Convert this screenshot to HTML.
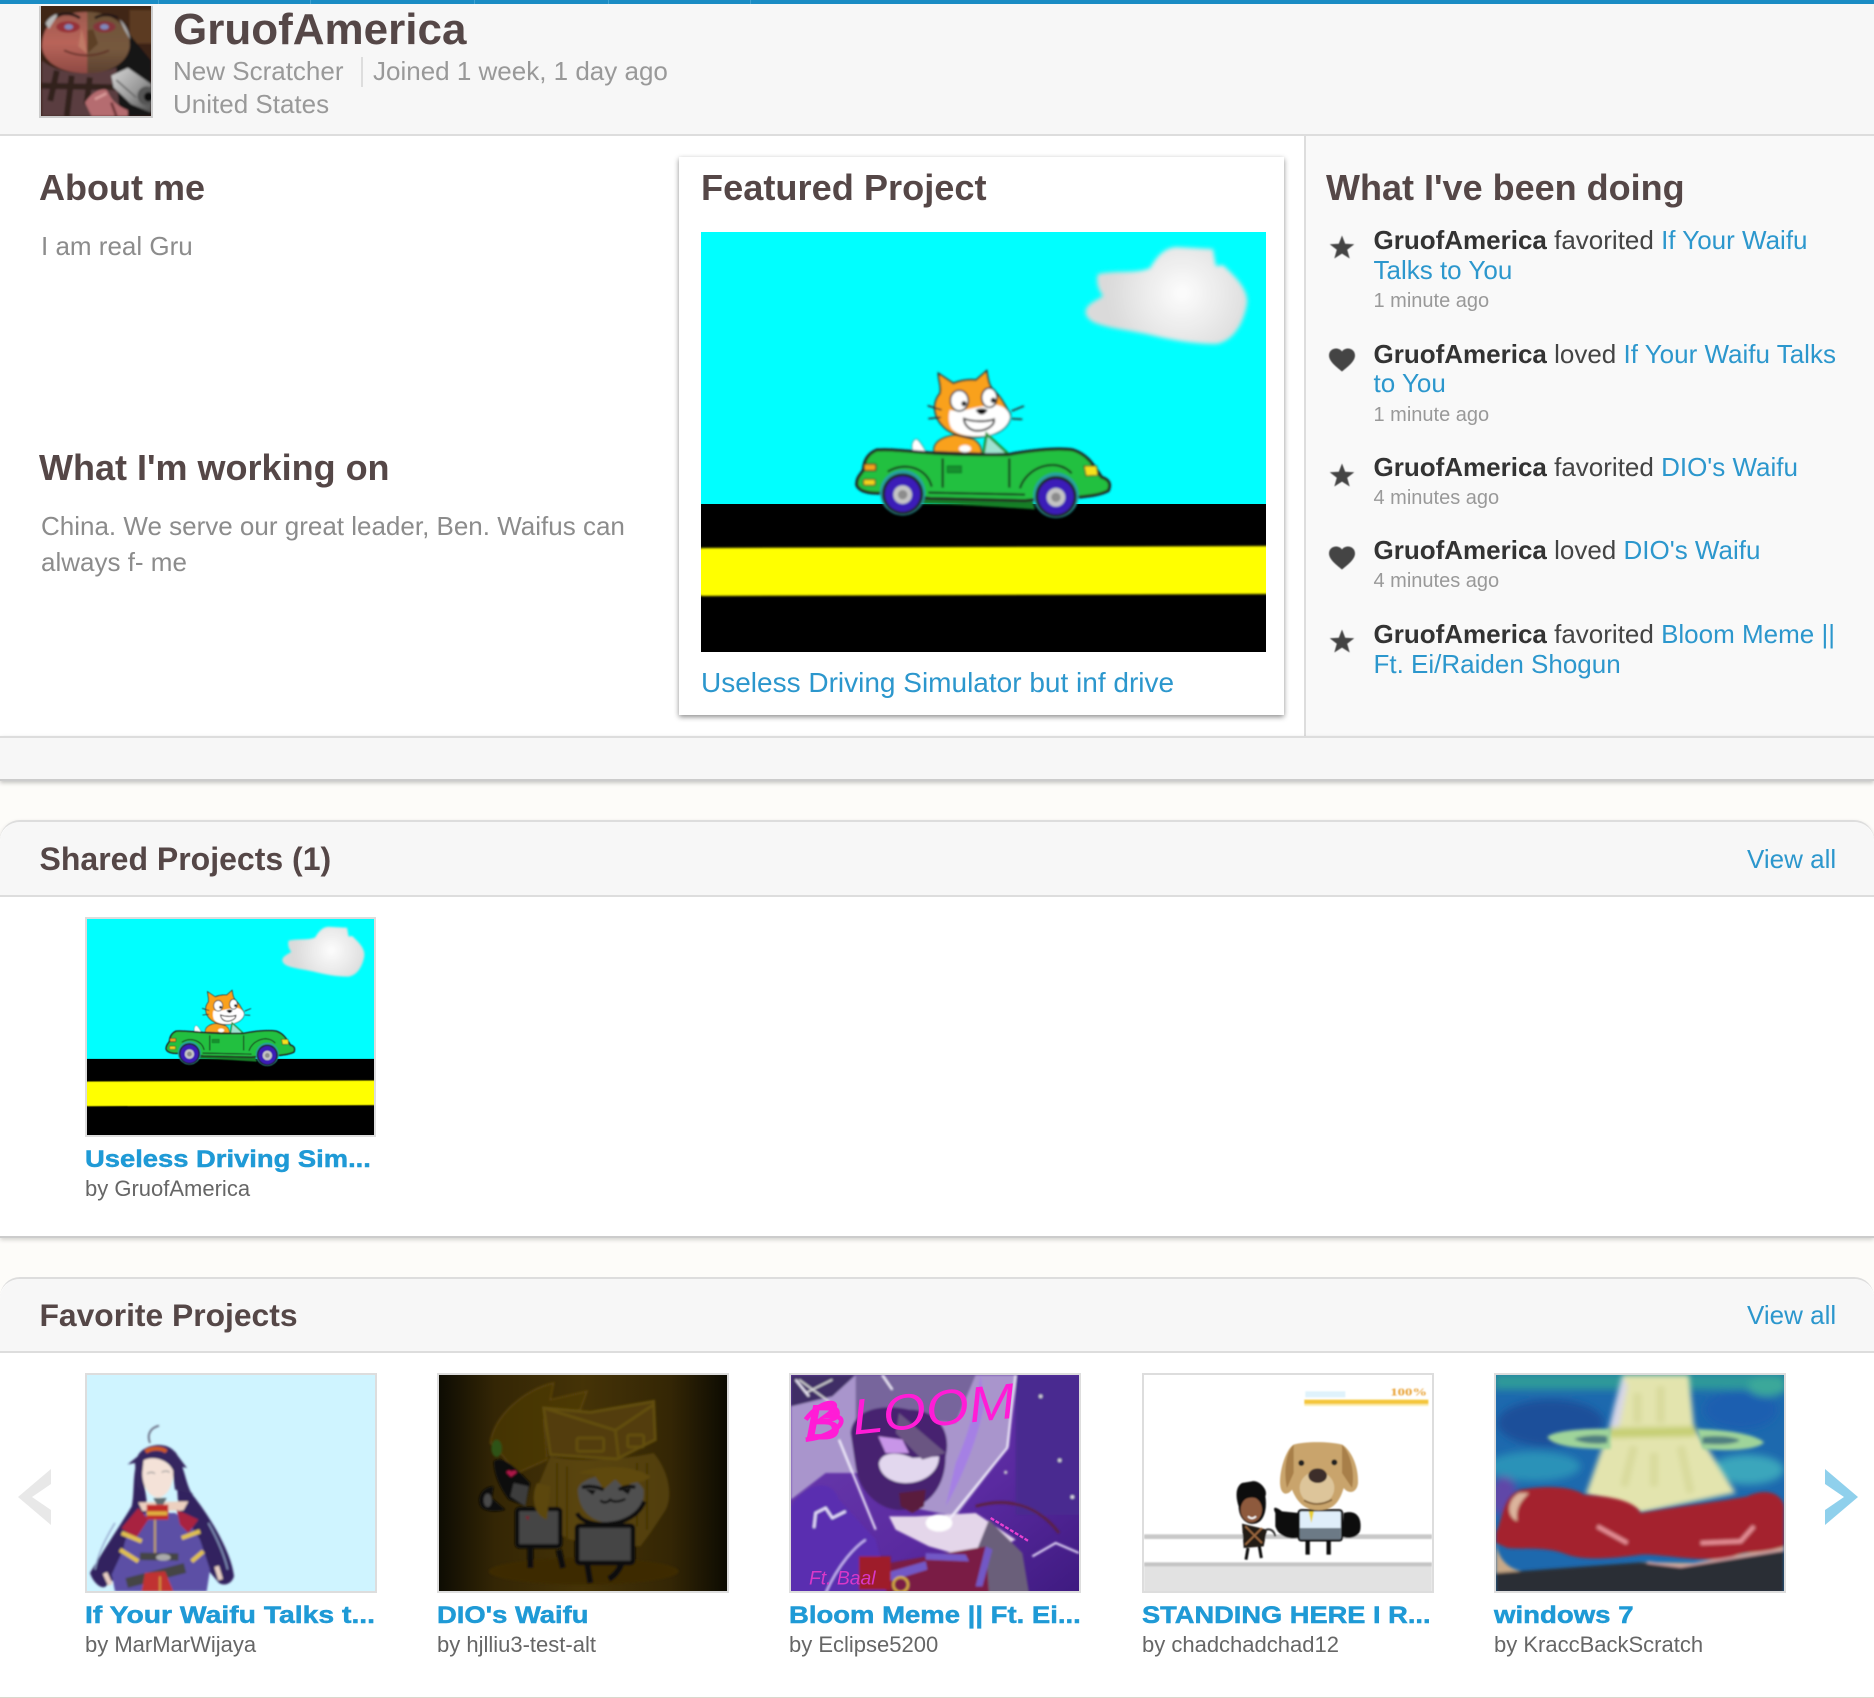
<!DOCTYPE html>
<html lang="en">
<head>
<meta charset="utf-8">
<title>GruofAmerica on Scratch</title>
<style>
html,body{margin:0;padding:0}
body{width:1874px;height:1698px;position:relative;overflow:hidden;background:#fdfcf9;font-family:"Liberation Sans",Arial,sans-serif;color:#666}
.abs,.t{position:absolute}
.t{line-height:40px;white-space:nowrap}
a{color:#2c97cd;text-decoration:none}
h1,h2,h3,p{margin:0;font-weight:normal}
.h{font-size:36px;font-weight:bold;color:#554747}
.m{font-size:26px;color:#999}
.b{font-size:26px;color:#8c8c8c}
.act{font-size:26px;color:#444}
.act b{color:#333}
.time{font-size:20px;color:#999}
.sh{font-size:32px;font-weight:bold;color:#554747}
.pt{font-size:24px;font-weight:bold;color:#1f9ad6;transform:scaleX(1.14);transform-origin:0 50%;-webkit-text-stroke:.5px #1f9ad6}
.by{font-size:22px;color:#666}
.thumb{position:absolute;width:292px;height:220px;box-sizing:border-box;border:2px solid #ddd;top:1373px;overflow:hidden;background:#fff}
.thumb svg{display:block;width:100%;height:100%}
.ic{position:absolute;width:26px;height:24px;filter:blur(.4px)}
</style>
</head>
<body>

<svg width="0" height="0" style="position:absolute">
<defs>
<filter id="b1"><feGaussianBlur stdDeviation="1"/></filter>
<filter id="b2"><feGaussianBlur stdDeviation="2"/></filter>
<filter id="b3"><feGaussianBlur stdDeviation="3"/></filter>
<filter id="b5"><feGaussianBlur stdDeviation="5"/></filter>
<filter id="b8"><feGaussianBlur stdDeviation="8"/></filter>
<filter id="b9"><feGaussianBlur stdDeviation="12"/></filter>
<radialGradient id="cl" gradientUnits="userSpaceOnUse" cx="481" cy="61" r="75"><stop offset="0" stop-color="#fdfdfd"/><stop offset=".7" stop-color="#e4e4e4"/><stop offset="1" stop-color="#dadada"/></radialGradient>
<linearGradient id="dio" x1="0" x2="1" y1="0" y2="0"><stop offset="0" stop-color="#0c0b03"/><stop offset=".2" stop-color="#342605"/><stop offset=".5" stop-color="#453306"/><stop offset=".8" stop-color="#342605"/><stop offset="1" stop-color="#0b0a02"/></linearGradient>
<linearGradient id="gun" x1="0" x2="1" y1="0" y2="1"><stop offset="0" stop-color="#d5d5d5"/><stop offset=".55" stop-color="#9a9a9a"/><stop offset="1" stop-color="#4d4d4d"/></linearGradient>
<linearGradient id="gruL" x1="0" x2="0" y1="0" y2="1"><stop offset="0" stop-color="#9c5a4e"/><stop offset=".5" stop-color="#b9655a"/><stop offset="1" stop-color="#8f4a44"/></linearGradient>
<linearGradient id="gruR" x1="0" x2="0" y1="0" y2="1"><stop offset="0" stop-color="#6e5238"/><stop offset=".6" stop-color="#76593e"/><stop offset="1" stop-color="#5c4030"/></linearGradient>
<linearGradient id="bl" x1="0" x2="1" y1="0" y2="1"><stop offset="0" stop-color="#6d3fb0"/><stop offset=".6" stop-color="#5a2aa0"/><stop offset="1" stop-color="#3e1a80"/></linearGradient>
<symbol id="drive" viewBox="0 0 565 420" preserveAspectRatio="none">
<rect width="565" height="420" fill="#0ff"/>
<rect y="272" width="565" height="148" fill="#000"/>
<path d="M2 316 L575 314 V362 L2 364 Q-6 364 -6 356 V324 Q-6 316 2 316Z" fill="#ff0" filter="url(#b1)"/>
<path d="M397 42 C415 38 435 42 449 36 C455 26 462 16 475 15 L512 17 L515 34 L522 33 C535 45 548 58 546 72 C542 95 530 110 515 112 C490 112 470 108 445 102 C425 98 405 96 392 90 C382 84 382 76 392 70 L402 64 C396 56 395 48 397 42Z" fill="url(#cl)" filter="url(#b2)"/>
<g transform="translate(139 128) scale(.3333)" filter="url(#b3)">
<path d="M218 272 C212 250 222 235 232 238 C245 250 250 262 258 276Z" fill="#fff" stroke="#333" stroke-width="2"/>
<path d="M282 275 C278 245 310 230 345 225 L400 238 C420 250 425 265 425 280Z" fill="#f9a11b" stroke="#333" stroke-width="4"/>
<ellipse cx="375" cy="266" rx="18" ry="11" fill="#fff"/>
<path d="M295 40 L340 70 C365 60 390 58 408 60 L440 32 C445 60 445 80 470 100 C490 120 492 135 510 160 C515 190 490 215 450 225 C400 240 340 230 310 200 C280 170 275 130 300 100 C305 80 295 60 295 40Z" fill="#f9a11b" stroke="#333" stroke-width="5"/>
<path d="M330 150 C370 160 410 135 470 135 C495 140 510 155 510 172 C505 200 480 215 450 225 C400 235 350 225 335 205 C325 190 325 165 330 150Z" fill="#fff"/>
<ellipse cx="358" cy="122" rx="27" ry="31" fill="#fff" stroke="#333" stroke-width="5"/>
<circle cx="372" cy="131" r="8" fill="#222"/>
<ellipse cx="448" cy="113" rx="23" ry="29" fill="#fff" stroke="#333" stroke-width="5"/>
<circle cx="460" cy="121" r="8" fill="#222"/>
<path d="M407 150 Q425 140 443 150 Q435 164 425 164 Q415 164 407 150Z" fill="#111"/>
<path d="M372 176 C400 186 440 186 462 178 C465 198 435 215 405 212 C385 208 372 192 372 176Z" fill="#fff" stroke="#333" stroke-width="6"/>
<path d="M263 137 L305 150 M265 176 L303 172 M515 153 L552 138 M515 176 L547 178" stroke="#333" stroke-width="5" fill="none"/>
<path d="M430 284 L440 222 L505 282Z" fill="#9fe3d0" stroke="#1a9030" stroke-width="8"/>
<path d="M585 448 C450 440 340 432 245 432 L245 415 L575 410Z" fill="#167f28"/>
<path d="M50 375 C50 350 62 345 70 330 C72 300 85 280 110 270 C180 265 250 285 430 284 L505 284 C560 272 650 262 700 270 C745 285 760 315 785 352 C805 358 815 370 805 392 C780 405 750 408 710 412 L590 418 L555 422 L270 415 L130 400 C100 400 60 400 50 375Z" fill="#21c040" stroke="#222" stroke-width="9"/>
<path d="M308 295 V383 M508 295 V383 M143 335 C190 305 260 320 275 380 M540 385 C560 320 650 290 695 340 M265 398 L555 404" stroke="#1a1a1a" stroke-width="6" fill="none"/>
<rect x="322" y="318" width="42" height="20" fill="#15902e" stroke="#0e6b20" stroke-width="3"/>
<rect x="72" y="312" width="36" height="20" rx="4" fill="#f4a21c" stroke="#222" stroke-width="4"/>
<rect x="70" y="358" width="36" height="18" rx="4" fill="#f4d21c" stroke="#222" stroke-width="3"/>
<path d="M732 318 L770 318 L774 346 L738 348Z" fill="#f7e11a" stroke="#222" stroke-width="3"/>
<circle cx="188" cy="398" r="68" fill="#25a0a0"/>
<circle cx="188" cy="402" r="62" fill="#222"/>
<circle cx="188" cy="402" r="53" fill="#3a1fb8"/>
<circle cx="188" cy="404" r="28" fill="#c4c4c4"/><circle cx="188" cy="404" r="14" fill="#8c8c8c"/>
<circle cx="648" cy="406" r="68" fill="#25a0a0"/>
<circle cx="648" cy="410" r="62" fill="#222"/>
<circle cx="648" cy="410" r="53" fill="#3a1fb8"/>
<circle cx="648" cy="412" r="28" fill="#c4c4c4"/><circle cx="648" cy="412" r="14" fill="#8c8c8c"/>
</g>
</symbol>
</defs>
</svg>

<!-- top nav sliver + profile header -->
<div class="abs" style="left:0;top:0;width:1874px;height:134px;background:#f7f7f7;border-bottom:2px solid #ddd"></div>
<div class="abs" style="left:0;top:0;width:1874px;height:4px;background:#1a8cc4"></div>
<div class="abs" style="left:158px;top:0;width:1px;height:4px;background:#3fa2d2"></div>
<div class="abs" style="left:310px;top:0;width:1px;height:4px;background:#3fa2d2"></div>
<div class="abs" style="left:474px;top:0;width:1px;height:4px;background:#3fa2d2"></div>
<div class="abs" style="left:608px;top:0;width:1px;height:4px;background:#3fa2d2"></div>
<div class="abs" style="left:750px;top:0;width:1px;height:4px;background:#3fa2d2"></div>

<div class="abs" style="left:39px;top:6px;width:114px;height:112px;box-sizing:border-box;border:2px solid #ccc;border-top:0;overflow:hidden">
<svg width="110" height="110" viewBox="12 8 333 327" preserveAspectRatio="none" style="display:block">
<g filter="url(#b3)">
<rect x="0" y="0" width="366" height="366" fill="#3a2418"/>
<rect x="0" y="0" width="366" height="60" fill="#3f2614"/>
<rect x="280" y="20" width="80" height="100" fill="#5b3a22"/>
<path d="M270 80 L345 170 V335 H260 L200 200Z" fill="#151515"/>
<path d="M15 170 C60 210 170 220 240 190 L250 335 H15Z" fill="#5a3e40"/>
<path d="M60 200 L40 290 M105 215 L90 335 M160 220 L150 300 M15 245 L240 250" stroke="#33211f" stroke-width="18" fill="none"/>
<path d="M15 130 C15 60 60 28 145 26 C230 26 285 70 280 130 C270 185 210 208 150 208 C80 208 20 180 15 130Z" fill="url(#gruL)"/>
<path d="M152 26 C230 26 285 70 280 130 C270 185 210 208 152 208Z" fill="url(#gruR)"/>
<path d="M26 60 C34 44 50 34 66 30 L36 76Z" fill="#b8b8b8"/>
<path d="M250 48 C268 62 278 85 282 108 L264 78Z" fill="#aaa"/>
<path d="M60 36 Q100 24 130 44 M175 44 Q205 26 245 43" stroke="#241712" stroke-width="8" fill="none"/>
<ellipse cx="94" cy="70" rx="36" ry="17" fill="#963338"/>
<ellipse cx="204" cy="70" rx="34" ry="17" fill="#84343b"/>
<ellipse cx="96" cy="70" rx="13" ry="8" fill="#7f89bc"/>
<ellipse cx="204" cy="70" rx="13" ry="8" fill="#7f89bc"/>
<path d="M135 76 L152 150 L125 128Z" fill="#c07a66"/>
<path d="M152 80 L170 78 L185 120 L152 150Z" fill="#5d4028"/>
<path d="M82 140 Q150 170 218 140" stroke="#5c2a24" stroke-width="5" fill="none"/>
<path d="M225 215 L275 192 L345 240 V325 L285 300 L232 250Z" fill="url(#gun)"/>
<path d="M240 228 L300 280" stroke="#666" stroke-width="5"/>
<circle cx="332" cy="275" r="28" fill="#555"/><circle cx="338" cy="278" r="14" fill="#0c0c0c"/>
<path d="M145 295 C165 265 195 250 212 258 C222 280 232 300 275 318 V335 H165Z" fill="#b56c70"/>
<path d="M175 285 L210 268" stroke="#d89a98" stroke-width="8"/>
<path d="M225 295 L240 335" stroke="#6a3236" stroke-width="8"/>
</g>
</svg>
</div>

<h1 class="t" style="left:173px;top:10px;font-size:44px;font-weight:bold;color:#554747">GruofAmerica</h1>
<span class="t m" style="left:173px;top:51px">New Scratcher</span>
<div class="abs" style="left:361px;top:57px;width:2px;height:30px;background:#ddd"></div>
<span class="t m" style="left:373px;top:51px">Joined 1 week, 1 day ago</span>
<span class="t m" style="left:173px;top:83.5px">United States</span>

<!-- main row -->
<div class="abs" style="left:0;top:136px;width:1874px;height:600px;background:#fff"></div>
<div class="abs" style="left:1304px;top:136px;width:570px;height:600px;box-sizing:border-box;border-left:2px solid #ddd;background:#f9f9f9"></div>

<h2 class="t h" style="left:39px;top:168px">About me</h2>
<p class="t b" style="left:41px;top:226px">I am real Gru</p>
<h2 class="t h" style="left:39px;top:448px">What I'm working on</h2>
<p class="t b" style="left:41px;top:506px">China. We serve our great leader, Ben. Waifus can</p>
<p class="t b" style="left:41px;top:542px">always f- me</p>

<div class="abs" style="left:679px;top:157px;width:605px;height:558px;background:#fff;box-shadow:0 2px 5px rgba(0,0,0,.45)"></div>
<h2 class="t h" style="left:701px;top:168px;font-size:36.2px">Featured Project</h2>
<svg class="abs" style="left:701px;top:232px" width="565" height="420"><use href="#drive" width="565" height="420"/></svg>
<a class="t" style="left:701px;top:663px;font-size:28px">Useless Driving Simulator but inf drive</a>

<h2 class="t h" style="left:1326px;top:168px">What I've been doing</h2>

<svg class="ic" style="left:1329px;top:235px" viewBox="0 0 26 24"><path d="M13 .5 L16.2 8.7 L25.3 9.2 L18.2 14.8 L20.7 23.5 L13 18.6 L5.3 23.5 L7.8 14.8 L.7 9.2 L9.8 8.7Z" fill="#444"/></svg>
<p class="t act" style="left:1373.5px;top:220px"><b>GruofAmerica</b> favorited <a>If Your Waifu</a></p>
<p class="t act" style="left:1373.5px;top:250px"><a>Talks to You</a></p>
<p class="t time" style="left:1373.5px;top:280.5px">1 minute ago</p>

<svg class="ic" style="left:1329px;top:348px" viewBox="0 0 26 24"><path d="M13 23.5 C9 20 0 14 0 7.5 C0 3 3.5 .5 7 .5 C9.5 .5 12 1.8 13 3.5 C14 1.8 16.5 .5 19 .5 C22.5 .5 26 3 26 7.5 C26 14 17 20 13 23.5Z" fill="#444"/></svg>
<p class="t act" style="left:1373.5px;top:333.5px"><b>GruofAmerica</b> loved <a>If Your Waifu Talks</a></p>
<p class="t act" style="left:1373.5px;top:363px"><a>to You</a></p>
<p class="t time" style="left:1373.5px;top:394.5px">1 minute ago</p>

<svg class="ic" style="left:1329px;top:463px" viewBox="0 0 26 24"><path d="M13 .5 L16.2 8.7 L25.3 9.2 L18.2 14.8 L20.7 23.5 L13 18.6 L5.3 23.5 L7.8 14.8 L.7 9.2 L9.8 8.7Z" fill="#444"/></svg>
<p class="t act" style="left:1373.5px;top:447px"><b>GruofAmerica</b> favorited <a>DIO's Waifu</a></p>
<p class="t time" style="left:1373.5px;top:477.5px">4 minutes ago</p>

<svg class="ic" style="left:1329px;top:546px" viewBox="0 0 26 24"><path d="M13 23.5 C9 20 0 14 0 7.5 C0 3 3.5 .5 7 .5 C9.5 .5 12 1.8 13 3.5 C14 1.8 16.5 .5 19 .5 C22.5 .5 26 3 26 7.5 C26 14 17 20 13 23.5Z" fill="#444"/></svg>
<p class="t act" style="left:1373.5px;top:530px"><b>GruofAmerica</b> loved <a>DIO's Waifu</a></p>
<p class="t time" style="left:1373.5px;top:560.5px">4 minutes ago</p>

<svg class="ic" style="left:1329px;top:629px" viewBox="0 0 26 24"><path d="M13 .5 L16.2 8.7 L25.3 9.2 L18.2 14.8 L20.7 23.5 L13 18.6 L5.3 23.5 L7.8 14.8 L.7 9.2 L9.8 8.7Z" fill="#444"/></svg>
<p class="t act" style="left:1373.5px;top:613.5px"><b>GruofAmerica</b> favorited <a>Bloom Meme ||</a></p>
<p class="t act" style="left:1373.5px;top:643.5px"><a>Ft. Ei/Raiden Shogun</a></p>

<!-- grey bar -->
<div class="abs" style="left:0;top:736px;width:1874px;height:41px;background:#f7f7f7;border-top:2px solid #ddd;border-bottom:2px solid #ccc;box-sizing:content-box;box-shadow:0 2px 4px rgba(0,0,0,.22)"></div>

<!-- shared -->
<div class="abs" style="left:0;top:820px;width:1874px;height:418px;box-sizing:border-box;background:#fff;border-top:2px solid #ddd;border-bottom:2px solid #ccc;border-radius:20px 20px 0 0;box-shadow:0 2px 4px rgba(0,0,0,.16)">
  <div style="height:73px;background:#f7f7f7;border-bottom:2px solid #ddd;border-radius:20px 20px 0 0"></div>
</div>
<h3 class="t sh" style="left:39.5px;top:839px">Shared Projects (1)</h3>
<a class="t" style="left:1747px;top:838.5px;font-size:26px">View all</a>
<div class="thumb" style="left:85px;top:917px;width:291px"><svg viewBox="0 0 565 420" preserveAspectRatio="none"><use href="#drive" width="565" height="420"/></svg></div>
<a class="t pt" style="left:85px;top:1140px">Useless Driving Sim...</a>
<span class="t by" style="left:85px;top:1168.5px">by GruofAmerica</span>

<!-- favorites -->
<div class="abs" style="left:0;top:1277px;width:1874px;height:421px;box-sizing:border-box;background:#fff;border-top:2px solid #ddd;border-bottom:1px solid #d8d8cc;border-radius:20px 20px 0 0">
  <div style="height:72px;background:#f7f7f7;border-bottom:2px solid #ddd;border-radius:20px 20px 0 0"></div>
</div>
<h3 class="t sh" style="left:39.5px;top:1295px;font-size:31.8px">Favorite Projects</h3>
<a class="t" style="left:1747px;top:1294.5px;font-size:26px">View all</a>

<svg class="abs" style="left:18px;top:1469px" width="34" height="56" viewBox="0 0 34 56"><path d="M33 0 L0 28 L33 56 V41 L14 28 L33 15Z" fill="#e8e8e8"/></svg>
<svg class="abs" style="left:1824px;top:1469px" width="34" height="56" viewBox="0 0 34 56"><path d="M1 0 L34 28 L1 56 V41 L20 28 L1 15Z" fill="#8fd0ec"/></svg>

<!-- thumb 1 -->
<div class="thumb" style="left:85px"><svg viewBox="6 6 864 648" preserveAspectRatio="none">
<rect width="876" height="660" fill="#cff4ff"/>
<g filter="url(#b3)">
<path d="M195 210 C185 185 195 165 222 158" stroke="#5a5a72" stroke-width="5" fill="none"/>
<path d="M165 240 C140 290 150 360 140 400 C110 450 50 540 15 600 C25 630 50 650 62 640 L110 600 L150 520 L190 420Z" fill="#33235f"/>
<path d="M270 235 C300 280 300 330 322 365 C375 430 440 540 447 610 C440 632 420 640 402 630 L360 580 L310 480 L280 400Z" fill="#33235f"/>
<path d="M90 450 C65 490 40 540 30 590 M370 450 C395 495 418 545 428 590" stroke="#8fa0c8" stroke-width="4" fill="none"/>
<path d="M150 270 L128 274 L158 250 C172 215 245 200 272 240 L306 285 L285 280 C290 320 300 340 325 365 L270 350 L262 290 C250 262 210 250 180 265 L176 360 L155 340Z" fill="#352560"/>
<path d="M176 262 C205 248 245 258 264 292 C268 335 245 372 220 374 C192 372 172 340 172 300Z" fill="#f4e2d8"/>
<path d="M186 302 q14 -8 24 0 M230 298 q14 -8 24 0" stroke="#9a9a9a" stroke-width="4" fill="none"/>
<path d="M182 236 C200 224 230 224 244 236" stroke="#d05a20" stroke-width="12" fill="none"/>
<path d="M160 388 L310 385 L295 412 L172 414Z" fill="#ecd0c0"/>
<path d="M205 375 L245 375 L235 395 L215 395Z" fill="#5d6b70"/>
<path d="M170 425 C145 450 120 490 115 530 L80 605 L90 655 L365 655 L375 590 L345 500 L310 445 L270 420 L180 420Z" fill="#5b4fa5"/>
<path d="M160 405 L110 465 L150 500 L190 440Z M275 410 L340 440 L310 480 L285 455Z" fill="#a8203f"/>
<rect x="185" y="395" width="65" height="45" fill="#c02a2a"/>
<rect x="185" y="415" width="62" height="12" fill="#e0b040"/>
<path d="M210 440 V540" stroke="#c0a060" stroke-width="6"/>
<path d="M110 480 L170 505 M105 530 L160 565 M290 495 L345 475 M320 565 L355 535" stroke="#e0c050" stroke-width="13" fill="none"/>
<path d="M165 550 L280 552" stroke="#444" stroke-width="22"/>
<path d="M125 630 L300 585" stroke="#444" stroke-width="30"/>
<path d="M180 600 L240 595 L265 655 H170Z" fill="#c03030"/>
<path d="M225 610 V655" stroke="#d0a040" stroke-width="5"/>
<ellipse cx="235" cy="553" rx="22" ry="10" fill="#aaa"/>
<path d="M60 600 l16 35 M395 580 l12 40" stroke="#e8cfc4" stroke-width="14"/>
</g></svg></div>
<a class="t pt" style="left:85px;top:1596px;transform:scaleX(1.18)">If Your Waifu Talks t...</a>
<span class="t by" style="left:85px;top:1625px">by MarMarWijaya</span>

<!-- thumb 2 -->
<div class="thumb" style="left:437px"><svg viewBox="6 6 864 648" preserveAspectRatio="none">
<rect width="876" height="660" fill="url(#dio)"/>
<g filter="url(#b3)">
<ellipse cx="440" cy="595" rx="285" ry="40" fill="#3c2c05"/>
<g opacity=".55">
<path d="M160 210 C170 130 260 50 350 30 L340 80 L450 55 L430 110 L320 140 L330 260 L240 300 L190 240Z" fill="#54400c" stroke="#6f5512" stroke-width="5"/>
<path d="M340 250 C420 270 560 260 650 240 C700 300 710 380 680 420 L640 480 L610 520 L400 500 C340 470 290 420 290 370 Z" fill="#6a5212"/>
<path d="M360 270 V480 M390 280 V500 M600 270 V460 M630 270 V470" stroke="#4c3a0a" stroke-width="6"/>
</g>
<path d="M320 105 L460 118 L650 85 L655 200 L540 258 L340 245Z" fill="#523e0b" stroke="#64500f" stroke-width="8"/>
<path d="M330 108 L535 172 L650 95 M535 172 L545 255" stroke="#64500f" stroke-width="8" fill="none"/>
<rect x="420" y="195" width="80" height="40" rx="5" fill="none" stroke="#64500f" stroke-width="8"/>
<rect x="572" y="186" width="48" height="36" rx="5" fill="none" stroke="#64500f" stroke-width="8"/>
<path d="M170 265 C200 240 250 300 280 330 L265 400 L215 380 C185 340 170 300 170 265Z" fill="#0a0a0a"/>
<path d="M230 330 L275 340 L265 400 L220 370Z" fill="#3d3d3d"/>
<ellipse cx="179" cy="226" rx="16" ry="26" fill="#2d5212"/>
<path d="M222 312 L208 298 Q214 288 224 296 Q234 288 240 298Z" fill="#b01848"/>
<path d="M170 340 C130 340 115 385 135 405 C155 420 195 415 205 410 L165 375Z" fill="#0a0a0a"/>
<ellipse cx="152" cy="382" rx="12" ry="20" fill="#4a4a4a"/>
<rect x="240" y="408" width="130" height="112" fill="#444" stroke="#0a0a0a" stroke-width="13" rx="8"/>
<path d="M280 525 V585 M365 530 L378 585" stroke="#0a0a0a" stroke-width="18" fill="none"/>
<path d="M265 430 l12 0 l-4 12z" fill="#80182a"/>
<path d="M300 330 C280 370 290 430 330 440 L340 340Z" fill="#5c470e"/>
<path d="M422 350 C425 420 470 450 525 450 C585 445 625 410 620 350 C600 310 540 300 480 310 C440 320 425 335 422 350Z" fill="#505050"/>
<path d="M425 300 C470 280 580 270 640 310 C620 335 590 320 560 345 L535 320 L500 350 L470 305Z" fill="#5f4a10"/>
<path d="M420 420 C440 470 590 470 622 385" stroke="#0a0a0a" stroke-width="13" fill="none"/>
<rect x="420" y="458" width="168" height="112" rx="8" fill="#454545" stroke="#0a0a0a" stroke-width="14"/>
<path d="M450 570 L460 630 M555 565 C550 590 530 610 515 618" stroke="#0a0a0a" stroke-width="18" fill="none"/>
<path d="M435 343 Q465 335 500 350 M545 350 Q570 335 595 343" stroke="#0a0a0a" stroke-width="10" fill="none"/>
<path d="M445 348 l22 18 l10 -14z M552 350 l22 14 l8 -18z" fill="#0a0a0a"/>
<path d="M490 382 Q505 395 520 380 Q535 392 565 378" stroke="#0a0a0a" stroke-width="7" fill="none"/>
</g></svg></div>
<a class="t pt" style="left:437px;top:1596px">DIO's Waifu</a>
<span class="t by" style="left:437px;top:1625px">by hjlliu3-test-alt</span>

<!-- thumb 3 -->
<div class="thumb" style="left:789px"><svg viewBox="6 6 864 648" preserveAspectRatio="none">
<rect width="876" height="660" fill="url(#bl)"/>
<g filter="url(#b3)">
<rect x="680" y="6" width="196" height="420" fill="#4a2a90"/>
<path d="M6 50 L100 6 L680 6 L660 220 L500 430 L350 400 L280 360 L215 300 L110 300 L6 380Z" fill="#a995cc"/>
<path d="M200 6 H560 L500 150 L300 130 L200 150Z" fill="#77659c"/>
<path d="M6 6 H200 L130 70 L6 100Z" fill="#3f2e66"/>
<path d="M30 20 L140 100 M50 60 L130 20" stroke="#ddd" stroke-width="5"/>
<path d="M6 400 C60 320 130 320 150 380 L260 500 L300 660 H6Z" fill="#5a2db0"/>
<path d="M185 180 C190 110 280 90 360 110 C440 110 490 170 470 250 C470 340 420 400 350 410 C280 420 210 360 200 280Z" fill="#472370"/>
<path d="M270 270 C280 230 340 240 370 255 L450 250 C450 300 400 330 350 330 C300 330 270 300 270 270Z" fill="#e2d7ee"/>
<path d="M268 190 L340 200 L360 240 L290 240Z" fill="#c895e8"/>
<path d="M330 120 L470 240 L400 260 L320 180Z" fill="#6a5582"/>
<path d="M330 360 L410 350 L405 400 L370 420 L335 400Z" fill="#5a1e3c"/>
<path d="M300 430 L380 430 L560 420 L680 500 L560 560 L420 520 L320 470Z" fill="#e4d6ea"/>
<path d="M600 440 L700 540 L720 660 H580 L560 540Z" fill="#6a5e7a"/>
<path d="M300 570 L590 520 L600 660 H290Z" fill="#7a1e44"/>
<path d="M290 600 L410 565 L415 590 L300 625Z M410 540 L530 545 L540 565 L410 560Z M590 520 L610 530 L580 640 L560 640Z" fill="#7258c6"/>
<rect x="210" y="550" width="95" height="100" fill="#9e1a2c"/>
<circle cx="335" cy="635" r="22" fill="none" stroke="#d8b040" stroke-width="7"/>
<path d="M575 6 C560 100 540 180 500 270 L470 400 C510 330 560 220 585 100Z" fill="#a580e4"/>
<path d="M680 6 L655 225 L480 440 M20 20 L60 70 M150 200 L260 470 M280 6 L310 50" stroke="#f5f0ff" stroke-width="6" fill="none"/>
<path d="M75 465 L80 420 L110 405 L130 435 L170 415" stroke="#eee6ff" stroke-width="7" fill="none"/>
<path d="M110 660 C150 570 200 520 230 500" stroke="#d9c6ff" stroke-width="5" fill="none"/>
<path d="M730 550 L800 510 L870 540" stroke="#eee6ff" stroke-width="6" fill="none"/>
<ellipse cx="450" cy="450" rx="40" ry="26" fill="#fff"/>
<path d="M560 400 C660 370 750 400 810 480" stroke="#5b2040" stroke-width="8" fill="none"/>
<circle cx="755" cy="70" r="5" fill="#ddd"/><circle cx="812" cy="262" r="5" fill="#ddd"/><circle cx="850" cy="372" r="5" fill="#eee"/><circle cx="650" cy="298" r="5" fill="#ccc"/>
</g>
<g filter="url(#b1)">
<text x="195" y="185" transform="rotate(-6 195 185)" font-family="Liberation Sans,sans-serif" font-style="italic" font-size="150" textLength="490" lengthAdjust="spacingAndGlyphs" fill="#ff1fd6">LOOM</text>
<text x="50" y="200" font-family="Liberation Sans,sans-serif" font-weight="bold" font-style="italic" font-size="150" fill="#ff1fd6">B</text>
<path d="M50 140 C100 70 180 80 110 130 C200 120 150 190 50 200" stroke="#ff1fd6" stroke-width="14" fill="none"/>
<text x="60" y="635" font-family="Liberation Sans,sans-serif" font-style="italic" font-size="58" fill="#d838c8">Ft. Baal</text>
<path d="M605 435 L720 505" stroke="#e83fd0" stroke-width="7" stroke-dasharray="12 5"/>
</g></svg></div>
<a class="t pt" style="left:789px;top:1596px;transform:scaleX(1.145)">Bloom Meme || Ft. Ei...</a>
<span class="t by" style="left:789px;top:1625px">by Eclipse5200</span>

<!-- thumb 4 -->
<div class="thumb" style="left:1142px"><svg viewBox="6 6 864 648" preserveAspectRatio="none">
<rect width="876" height="660" fill="#fff"/>
<g filter="url(#b2)">
<rect x="6" y="484" width="864" height="14" fill="#c8c8c8"/>
<rect x="6" y="570" width="864" height="90" fill="#e2e2e2"/>
<rect x="6" y="568" width="864" height="12" fill="#c4c4c4"/>
<rect x="487" y="80" width="372" height="13" fill="#f4c63a"/>
<rect x="487" y="93" width="372" height="6" fill="#fbeeb0"/>
<rect x="490" y="55" width="120" height="18" fill="#dff2fb"/>
<text x="745" y="68" font-family="Liberation Serif,serif" font-size="30" font-weight="bold" fill="#e8a030" textLength="110" lengthAdjust="spacingAndGlyphs">100%</text>
<path d="M400 420 C390 400 400 400 420 415 L470 420 L470 495 C440 500 410 490 400 460Z" fill="#0c0c0c"/>
<path d="M605 420 C640 410 660 430 655 470 C650 495 620 500 600 490Z" fill="#0c0c0c"/>
<rect x="470" y="412" width="130" height="90" rx="8" fill="#dfeefa" stroke="#111" stroke-width="7"/>
<rect x="474" y="465" width="122" height="34" fill="#6c7a86"/>
<path d="M500 415 L508 450 L516 415Z" fill="#e8d030"/>
<path d="M497 500 V545 M560 500 V545" stroke="#111" stroke-width="13"/>
<path d="M455 215 C430 230 410 300 415 340 C420 370 440 365 450 350 C470 400 500 412 530 412 C570 410 590 395 605 345 C620 365 645 360 648 330 C650 270 620 225 600 215 C560 205 490 205 455 215Z" fill="#c9a46c"/>
<path d="M455 215 C430 240 425 300 435 345 L455 300Z M600 215 C625 240 640 300 630 345 L600 300Z" fill="#a87f4a"/>
<ellipse cx="525" cy="345" rx="52" ry="50" fill="#ddc59a"/>
<ellipse cx="527" cy="308" rx="28" ry="22" fill="#3e2f2a"/>
<circle cx="478" cy="270" r="9" fill="#222"/><circle cx="577" cy="268" r="9" fill="#222"/>
<path d="M486 382 Q527 405 570 380" stroke="#8a6a40" stroke-width="6" fill="none"/>
<path d="M300 330 C275 345 285 385 290 400 C290 440 320 460 345 450 C370 440 375 400 370 370 C380 350 350 320 330 325 Z" fill="#0c0c0c"/>
<ellipse cx="328" cy="410" rx="32" ry="38" fill="#8e5a3c"/>
<path d="M300 385 C315 370 345 370 360 385 L360 365 L300 365Z" fill="#0c0c0c"/>
<path d="M318 430 Q330 442 342 430" stroke="#fff" stroke-width="5" fill="none"/>
<path d="M300 452 L375 470 L365 520 L305 525Z" fill="#201a16"/>
<path d="M310 460 L360 510 M360 465 L310 515" stroke="#a06a40" stroke-width="5"/>
<path d="M318 525 L312 560 M352 520 L358 555" stroke="#111" stroke-width="9"/>
<path d="M372 470 q22 -5 28 20" stroke="#333" stroke-width="6" fill="none"/>
</g></svg></div>
<a class="t pt" style="left:1142px;top:1596px;transform:scaleX(1.135)">STANDING HERE I R...</a>
<span class="t by" style="left:1142px;top:1625px">by chadchadchad12</span>

<!-- thumb 5 -->
<div class="thumb" style="left:1494px"><svg viewBox="6 6 864 648" preserveAspectRatio="none">
<rect width="876" height="660" fill="#1d69ae"/>
<g filter="url(#b9)">
<rect x="0" y="0" width="876" height="50" fill="#2e9a9a"/>
<ellipse cx="170" cy="150" rx="160" ry="70" fill="#1b4f9a"/>
<ellipse cx="740" cy="110" rx="110" ry="60" fill="#1a5fb0"/>
<ellipse cx="120" cy="280" rx="140" ry="45" fill="#2a92b8"/>
<ellipse cx="760" cy="290" rx="110" ry="45" fill="#3aa6bc"/>
<ellipse cx="30" cy="370" rx="40" ry="60" fill="#6046a8"/>
<ellipse cx="820" cy="40" rx="60" ry="30" fill="#3aa89a"/>
</g>
<g filter="url(#b8)">
<path d="M385 6 L585 6 L600 160 L725 360 L440 420 L275 365 L345 165Z" fill="#e3e4ae"/>
<path d="M385 6 L360 100 L345 165 L375 160 L400 40Z" fill="#d6d6e6"/>
<path d="M430 60 V150 M500 40 V150 M480 240 V340 M560 220 L590 360 M420 220 L390 340" stroke="#d8da9c" stroke-width="24" fill="none"/>
<path d="M345 165 L605 160 V190 L345 195Z" fill="#c6cf74"/>
</g>
<g filter="url(#b5)">
<path d="M160 192 C180 170 300 165 350 168 V228 C280 228 180 225 160 192Z" fill="#9fd49a"/>
<path d="M240 198 C270 185 320 185 340 190 V210 C310 215 265 212 240 198Z" fill="#4f7f80"/>
<path d="M610 168 C680 170 780 180 810 208 C790 232 690 235 625 228Z" fill="#9fd49a"/>
<path d="M625 192 C670 186 720 190 738 202 C720 216 660 216 625 212Z" fill="#4f7f80"/>
<path d="M6 510 C20 600 100 600 140 600 L440 568 L600 570 L870 520 V530 L440 600 L6 610Z" fill="#c8a988"/>
<path d="M6 480 C30 420 30 370 80 350 C130 340 230 335 270 365 C340 370 420 380 440 420 C550 400 680 385 760 370 C800 350 860 350 870 400 V520 C800 545 760 530 720 550 C640 575 500 540 440 545 C340 560 260 560 220 545 C160 520 100 530 40 525 L6 510Z" fill="#a4232e"/>
<path d="M75 360 C40 380 35 430 70 445 C65 410 75 390 105 360Z" fill="#dcb49c"/>
<path d="M310 460 L400 510 M620 510 L740 505 L780 460" stroke="#e8929a" stroke-width="12" fill="none"/>
<path d="M6 600 L440 568 L560 578 L870 530 V660 H6Z" fill="#2c2d35"/>
<path d="M460 568 L560 580 L870 530" stroke="#e0b0b4" stroke-width="6" fill="none"/>
</g></svg></div>
<a class="t pt" style="left:1494px;top:1596px;transform:scaleX(1.15)">windows 7</a>
<span class="t by" style="left:1494px;top:1625px">by KraccBackScratch</span>

</body>
</html>
